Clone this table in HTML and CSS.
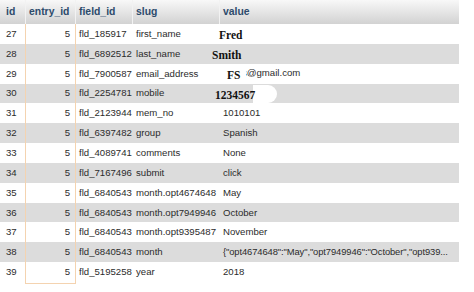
FILE: index.html
```html
<!DOCTYPE html>
<html>
<head>
<meta charset="utf-8">
<link rel="stylesheet" href="styles.css">
</head>
<body>
<div class="sheet">
  <div class="grid">
    <div class="row head">
      <div class="cell">id</div>
      <div class="cell">entry_id</div>
      <div class="cell">field_id</div>
      <div class="cell">slug</div>
      <div class="cell">value</div>
    </div>
    <div class="row">
      <div class="cell">27</div><div class="cell num">5</div><div class="cell">fld_185917</div><div class="cell">first_name</div>
      <div class="cell val"><span class="hand fred">Fred</span></div>
    </div>
    <div class="row alt">
      <div class="cell">28</div><div class="cell num">5</div><div class="cell">fld_6892512</div><div class="cell">last_name</div>
      <div class="cell val"><span class="hand smith">Smith</span></div>
    </div>
    <div class="row">
      <div class="cell">29</div><div class="cell num">5</div><div class="cell">fld_7900587</div><div class="cell">email_address</div>
      <div class="cell val"><span class="mail">s@gmail.com<span class="mask"></span></span><span class="hand fs">FS</span></div>
    </div>
    <div class="row alt">
      <div class="cell">30</div><div class="cell num">5</div><div class="cell">fld_2254781</div><div class="cell">mobile</div>
      <div class="cell val"><span class="pill"></span><span class="hand phone">1234567</span></div>
    </div>
    <div class="row">
      <div class="cell">31</div><div class="cell num">5</div><div class="cell">fld_2123944</div><div class="cell">mem_no</div><div class="cell">1010101</div>
    </div>
    <div class="row alt">
      <div class="cell">32</div><div class="cell num">5</div><div class="cell">fld_6397482</div><div class="cell">group</div><div class="cell">Spanish</div>
    </div>
    <div class="row">
      <div class="cell">33</div><div class="cell num">5</div><div class="cell">fld_4089741</div><div class="cell">comments</div><div class="cell">None</div>
    </div>
    <div class="row alt">
      <div class="cell">34</div><div class="cell num">5</div><div class="cell">fld_7167496</div><div class="cell">submit</div><div class="cell">click</div>
    </div>
    <div class="row">
      <div class="cell">35</div><div class="cell num">5</div><div class="cell">fld_6840543</div><div class="cell">month.opt4674648</div><div class="cell">May</div>
    </div>
    <div class="row alt">
      <div class="cell">36</div><div class="cell num">5</div><div class="cell">fld_6840543</div><div class="cell">month.opt7949946</div><div class="cell">October</div>
    </div>
    <div class="row">
      <div class="cell">37</div><div class="cell num">5</div><div class="cell">fld_6840543</div><div class="cell">month.opt9395487</div><div class="cell">November</div>
    </div>
    <div class="row alt">
      <div class="cell">38</div><div class="cell num">5</div><div class="cell">fld_6840543</div><div class="cell">month</div><div class="cell long">{"opt4674648":"May","opt7949946":"October","opt939...</div>
    </div>
    <div class="row">
      <div class="cell">39</div><div class="cell num">5</div><div class="cell">fld_5195258</div><div class="cell">year</div><div class="cell">2018</div>
    </div>
  </div>
  <div class="colmark"></div>
</div>
</body>
</html>
```
FILE: styles.css
```css
html, body {
  margin: 0;
  padding: 0;
  background: #ffffff;
}
body {
  font-family: "Liberation Sans", Arial, sans-serif;
  font-size: 9.6px;
  color: #2b2b2b;
}
.sheet {
  position: relative;
  width: 474px;
  height: 292px;
}
.grid {
  width: 459px;
  display: flex;
  flex-direction: column;
}
.row {
  display: grid;
  grid-template-columns: 25px 50px 57px 87px 240px;
  height: 19.85px;
  align-items: center;
}
.row.alt {
  background: #dcdcdc;
}
.row.head {
  height: 24px;
  background: linear-gradient(#f8f8f8, #d2d2d2);
  font-weight: bold;
  font-size: 10.4px;
  color: #2d4b6c;
}
.head .cell {
  height: 100%;
  display: flex;
  align-items: center;
  border-left: 1px solid #f2f2f2;
  padding-left: 3px;
}
.head .cell:first-child {
  border-left: none;
  padding-left: 6px;
}
.cell {
  white-space: nowrap;
  padding-left: 4px;
  line-height: 12px;
}
.row .cell:first-child {
  padding-left: 6px;
}
.cell.num {
  text-align: right;
  padding-right: 5px;
}
.cell.long {
  font-size: 9.4px;
  letter-spacing: -0.1px;
}
.cell.val {
  position: relative;
  height: 100%;
}
.hand {
  position: absolute;
  font-family: "Liberation Serif", "Times New Roman", serif;
  font-weight: bold;
  font-size: 11.5px;
  color: #111;
  line-height: 12px;
}
.fred { left: 0px; top: 5px; }
.smith { left: -7px; top: 5px; }
.fs { left: 8px; top: 5px; }
.phone { left: -4px; top: 5px; }
.mail {
  position: absolute;
  left: 23px;
  top: 3px;
  line-height: 12px;
  color: #2b2b2b;
}
.mask {
  position: absolute;
  left: -2px;
  top: -1px;
  width: 6px;
  height: 14px;
  background: #ffffff;
}
.pill {
  position: absolute;
  left: 34px;
  top: 1px;
  width: 24px;
  height: 18px;
  background: #ffffff;
  border-radius: 0 10px 10px 0;
}
.colmark {
  position: absolute;
  left: 25px;
  top: 24px;
  width: 49px;
  height: 259px;
  border: 1px solid #f4d3b0;
  border-top: none;
}
```
